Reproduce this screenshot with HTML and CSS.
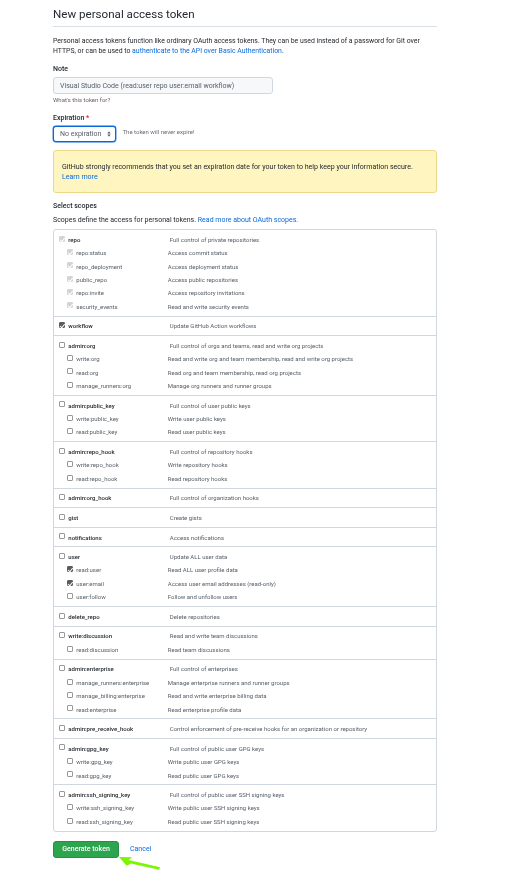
FILE: index.html
```html
<!DOCTYPE html>
<html lang="en">
<head>
<meta charset="utf-8">
<title>New personal access token</title>
<link rel="stylesheet" href="styles.css">
</head>
<body>
<main class="page">
  <h1 class="title">New personal access token</h1>
  <p class="intro">Personal access tokens function like ordinary OAuth access tokens. They can be used instead of a password for Git over HTTPS, or can be used to <a href="#">authenticate to the API over Basic Authentication</a>.</p>

  <div class="field-label note-label">Note</div>
  <div class="note-input">Visual Studio Code (read:user repo user:email workflow)</div>
  <div class="hint">What's this token for?</div>

  <div class="field-label exp-label">Expiration <span class="req">*</span></div>
  <div class="exp-row">
    <div class="select">No expiration
      <svg class="updown" viewBox="0 0 6 8" width="4" height="6"><path d="M3 0 5.6 3.4H.4zM3 8 .4 4.6h5.2z"/></svg>
    </div>
    <span class="exp-note">The token will never expire!</span>
  </div>

  <div class="warning">GitHub strongly recommends that you set an expiration date for your token to help keep your information secure. <a href="#">Learn more</a></div>

  <div class="field-label scopes-label">Select scopes</div>
  <p class="scopes-intro">Scopes define the access for personal tokens. <a href="#">Read more about OAuth scopes.</a></p>

  <div class="scopes">
    <div class="group">
      <div class="row main"><input class="cb" type="checkbox" checked disabled><span class="name">repo</span><span class="desc">Full control of private repositories</span></div>
      <div class="row sub"><input class="cb" type="checkbox" checked disabled><span class="name">repo:status</span><span class="desc">Access commit status</span></div>
      <div class="row sub"><input class="cb" type="checkbox" checked disabled><span class="name">repo_deployment</span><span class="desc">Access deployment status</span></div>
      <div class="row sub"><input class="cb" type="checkbox" checked disabled><span class="name">public_repo</span><span class="desc">Access public repositories</span></div>
      <div class="row sub"><input class="cb" type="checkbox" checked disabled><span class="name">repo:invite</span><span class="desc">Access repository invitations</span></div>
      <div class="row sub"><input class="cb" type="checkbox" checked disabled><span class="name">security_events</span><span class="desc">Read and write security events</span></div>
    </div>
    <div class="group">
      <div class="row main"><input class="cb" type="checkbox" checked><span class="name">workflow</span><span class="desc">Update GitHub Action workflows</span></div>
    </div>
    <div class="group">
      <div class="row main"><input class="cb" type="checkbox"><span class="name">admin:org</span><span class="desc">Full control of orgs and teams, read and write org projects</span></div>
      <div class="row sub"><input class="cb" type="checkbox"><span class="name">write:org</span><span class="desc">Read and write org and team membership, read and write org projects</span></div>
      <div class="row sub"><input class="cb" type="checkbox"><span class="name">read:org</span><span class="desc">Read org and team membership, read org projects</span></div>
      <div class="row sub"><input class="cb" type="checkbox"><span class="name">manage_runners:org</span><span class="desc">Manage org runners and runner groups</span></div>
    </div>
    <div class="group">
      <div class="row main"><input class="cb" type="checkbox"><span class="name">admin:public_key</span><span class="desc">Full control of user public keys</span></div>
      <div class="row sub"><input class="cb" type="checkbox"><span class="name">write:public_key</span><span class="desc">Write user public keys</span></div>
      <div class="row sub"><input class="cb" type="checkbox"><span class="name">read:public_key</span><span class="desc">Read user public keys</span></div>
    </div>
    <div class="group">
      <div class="row main"><input class="cb" type="checkbox"><span class="name">admin:repo_hook</span><span class="desc">Full control of repository hooks</span></div>
      <div class="row sub"><input class="cb" type="checkbox"><span class="name">write:repo_hook</span><span class="desc">Write repository hooks</span></div>
      <div class="row sub"><input class="cb" type="checkbox"><span class="name">read:repo_hook</span><span class="desc">Read repository hooks</span></div>
    </div>
    <div class="group">
      <div class="row main"><input class="cb" type="checkbox"><span class="name">admin:org_hook</span><span class="desc">Full control of organization hooks</span></div>
    </div>
    <div class="group">
      <div class="row main"><input class="cb" type="checkbox"><span class="name">gist</span><span class="desc">Create gists</span></div>
    </div>
    <div class="group">
      <div class="row main"><input class="cb" type="checkbox"><span class="name">notifications</span><span class="desc">Access notifications</span></div>
    </div>
    <div class="group">
      <div class="row main"><input class="cb" type="checkbox"><span class="name">user</span><span class="desc">Update ALL user data</span></div>
      <div class="row sub"><input class="cb" type="checkbox" checked><span class="name">read:user</span><span class="desc">Read ALL user profile data</span></div>
      <div class="row sub"><input class="cb" type="checkbox" checked><span class="name">user:email</span><span class="desc">Access user email addresses (read-only)</span></div>
      <div class="row sub"><input class="cb" type="checkbox"><span class="name">user:follow</span><span class="desc">Follow and unfollow users</span></div>
    </div>
    <div class="group">
      <div class="row main"><input class="cb" type="checkbox"><span class="name">delete_repo</span><span class="desc">Delete repositories</span></div>
    </div>
    <div class="group">
      <div class="row main"><input class="cb" type="checkbox"><span class="name">write:discussion</span><span class="desc">Read and write team discussions</span></div>
      <div class="row sub"><input class="cb" type="checkbox"><span class="name">read:discussion</span><span class="desc">Read team discussions</span></div>
    </div>
    <div class="group">
      <div class="row main"><input class="cb" type="checkbox"><span class="name">admin:enterprise</span><span class="desc">Full control of enterprises</span></div>
      <div class="row sub"><input class="cb" type="checkbox"><span class="name">manage_runners:enterprise</span><span class="desc">Manage enterprise runners and runner groups</span></div>
      <div class="row sub"><input class="cb" type="checkbox"><span class="name">manage_billing:enterprise</span><span class="desc">Read and write enterprise billing data</span></div>
      <div class="row sub"><input class="cb" type="checkbox"><span class="name">read:enterprise</span><span class="desc">Read enterprise profile data</span></div>
    </div>
    <div class="group">
      <div class="row main"><input class="cb" type="checkbox"><span class="name">admin:pre_receive_hook</span><span class="desc">Control enforcement of pre-receive hooks for an organization or repository</span></div>
    </div>
    <div class="group">
      <div class="row main"><input class="cb" type="checkbox"><span class="name">admin:gpg_key</span><span class="desc">Full control of public user GPG keys</span></div>
      <div class="row sub"><input class="cb" type="checkbox"><span class="name">write:gpg_key</span><span class="desc">Write public user GPG keys</span></div>
      <div class="row sub"><input class="cb" type="checkbox"><span class="name">read:gpg_key</span><span class="desc">Read public user GPG keys</span></div>
    </div>
    <div class="group">
      <div class="row main"><input class="cb" type="checkbox"><span class="name">admin:ssh_signing_key</span><span class="desc">Full control of public user SSH signing keys</span></div>
      <div class="row sub"><input class="cb" type="checkbox"><span class="name">write:ssh_signing_key</span><span class="desc">Write public user SSH signing keys</span></div>
      <div class="row sub"><input class="cb" type="checkbox"><span class="name">read:ssh_signing_key</span><span class="desc">Read public user SSH signing keys</span></div>
    </div>
  </div>

  <div class="actions">
    <button class="generate" type="button">Generate token</button>
    <a class="cancel" href="#">Cancel</a>
    <svg class="arrow" viewBox="0 0 46 16" width="46" height="16"><path d="M1 1 14.3 1.3 10.6 4 42 11.3 41 13.7 13 7.5 8.7 9.7z"/></svg>
  </div>
</main>
</body>
</html>
```
FILE: styles.css
```css
* { box-sizing: border-box; }
html, body { margin: 0; padding: 0; background: #fff; }
body {
  font-family: Roboto, "Liberation Sans", sans-serif;
  color: #24292f;
  font-size: 7px;
}
a { color: #0969da; text-decoration: none; }
.page {
  width: 384px;
  margin-left: 53px;
  padding-bottom: 20px;
  position: relative;
  filter: blur(0.4px);
}
.title {
  margin: 0;
  height: 26.5px;
  padding-top: 4px;
  font-weight: 400;
  font-size: 11.6px;
  line-height: 20px;
  border-bottom: 1px solid #d8dee4;
}
.intro {
  margin: 9.5px 0 0;
  font-size: 6.9px;
  line-height: 10px;
}
.field-label { font-weight: 500; line-height: 10px; }
.note-label { margin-top: 8px; }
.note-input {
  width: 220px;
  height: 17px;
  margin-top: 3px;
  padding-left: 6px;
  display: flex;
  align-items: center;
  background: #f6f8fa;
  border: 1px solid #d0d7de;
  border-radius: 3px;
  color: #57606a;
}
.hint { margin-top: 2px; font-size: 6px; line-height: 8px; color: #6e5d66; }
.exp-label { margin-top: 9px; }
.req { color: #cf222e; }
.exp-row { display: flex; align-items: flex-start; margin-top: 3px; }
.select {
  width: 63px;
  height: 16px;
  padding: 0 4px 0 6px;
  display: flex;
  align-items: center;
  justify-content: space-between;
  border: 1px solid #0969da;
  box-shadow: 0 0 0 0.4px #0969da;
  border-radius: 3px;
  color: #57606a;
  background: #fff;
}
.updown { fill: #57606a; }
.exp-note { margin: 2px 0 0 6.5px; font-size: 6px; line-height: 8px; color: #6e6a77; }
.warning {
  margin-top: 8px;
  height: 43px;
  padding: 11px 8px 0;
  font-size: 7.05px;
  line-height: 10px;
  background: #fff5c1;
  border: 1px solid #eed888;
  border-radius: 3px;
}
.scopes-label { margin-top: 8px; }
.scopes-intro { margin: 4px 0 0; line-height: 10px; }
.scopes {
  margin-top: 4px;
  border: 1px solid #d0d7de;
  border-radius: 3px;
  font-size: 6px;
}
.group { padding: 2.6px 0; border-top: 1px solid #d0d7de; }
.group:first-child { border-top: 0; }
.row { display: flex; align-items: center; height: 13.4px; }
.row.main { padding-left: 4.5px; }
.row.sub { padding-left: 12.5px; }
.row .cb { margin: -1.5px 3.8px 0 0; flex: none; }
.name { color: #57606a; }
.main .name { width: 101.5px; font-weight: 500; color: #24292f; }
.sub .name { width: 91.5px; }
.desc { color: #57606a; }
.cb {
  appearance: none;
  width: 6px;
  height: 6px;
  border: 0.6px solid #999;
  border-radius: 1px;
  background: #fff;
  position: relative;
}
.cb:checked { background: #5c5c5c; border-color: #5c5c5c; }
.cb:disabled { background: #d4d4d4; border-color: #d4d4d4; }
.cb:checked::after {
  content: "";
  position: absolute;
  left: 1.5px;
  top: 0;
  width: 2px;
  height: 3.6px;
  border: solid #fff;
  border-width: 0 0.8px 0.8px 0;
  transform: rotate(40deg);
}
.actions {
  position: relative;
  display: flex;
  align-items: center;
  margin-top: 9px;
  height: 17px;
}
.generate {
  width: 66px;
  height: 17px;
  padding: 0;
  font: 500 7px Roboto, "Liberation Sans", sans-serif;
  color: #fff;
  background: #2da44e;
  border: 1px solid #288f45;
  border-radius: 3px;
}
.cancel { margin-left: 11px; }
.arrow { position: absolute; left: 65px; top: 15px; fill: #7cf500; }
```
